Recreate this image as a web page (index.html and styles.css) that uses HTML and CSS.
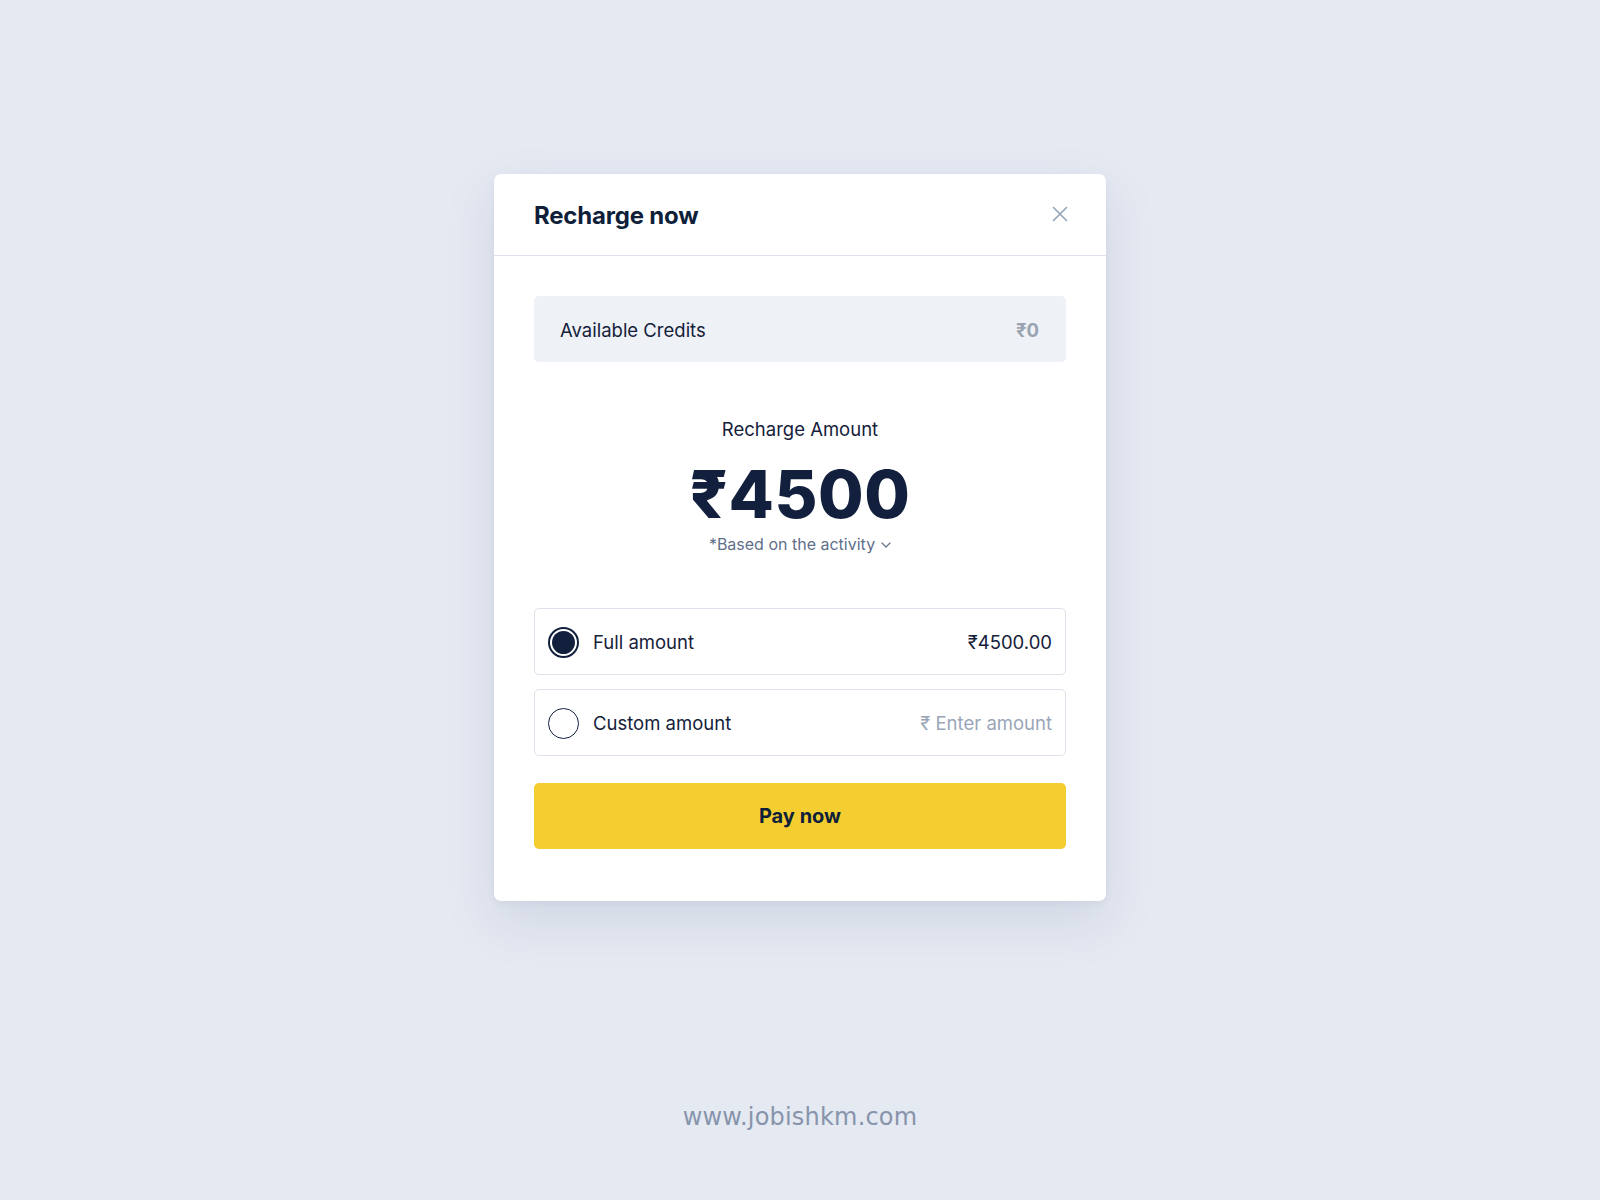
FILE: index.html
```html
<!DOCTYPE html>
<html>
<head>
<meta charset="utf-8">
<link rel="stylesheet" href="styles.css">
</head>
<body>
<main class="page">
  <section class="modal">
    <header class="modal-head">
      <h1 class="title">Recharge now</h1>
      <svg class="close" width="16" height="16" viewBox="0 0 16 16"><path d="M1.5 1.5 L14.5 14.5 M14.5 1.5 L1.5 14.5" stroke="#94a3b8" stroke-width="1.6" stroke-linecap="round" fill="none"/></svg>
    </header>
    <div class="modal-body">
      <div class="credits">
        <span class="credits-label">Available Credits</span>
        <span class="credits-value">₹0</span>
      </div>
      <div class="amount">
        <div class="amount-label">Recharge Amount</div>
        <div class="amount-value">₹4500</div>
        <div class="amount-note">*Based on the activity <svg class="chev" width="10" height="6" viewBox="0 0 10 6"><path d="M1 1 L5 5 L9 1" stroke="#64748b" stroke-width="1.2" fill="none" stroke-linecap="round" stroke-linejoin="round"/></svg></div>
      </div>
      <div class="options">
        <div class="option">
          <span class="radio radio-on"><span class="dot"></span></span>
          <span class="opt-label">Full amount</span>
          <span class="opt-value">₹4500.00</span>
        </div>
        <div class="option">
          <span class="radio"></span>
          <span class="opt-label">Custom amount</span>
          <span class="opt-placeholder">₹ Enter amount</span>
        </div>
      </div>
      <button class="pay">Pay now</button>
    </div>
  </section>
  <footer class="site">www.jobishkm.com</footer>
</main>
</body>
</html>
```

FILE: styles.css
```css
* { box-sizing: border-box; }
html, body { margin: 0; padding: 0; }
body {
  background: #e5e9f2;
  font-family: Inter, "Noto Sans", sans-serif;
  color: #0f1f3a;
  width: 1600px;
  height: 1200px;
  overflow: hidden;
}
.page {
  display: flex;
  flex-direction: column;
  align-items: center;
  padding-top: 174px;
}
.modal {
  width: 612px;
  height: 727px;
  background: #fff;
  border-radius: 7px;
  box-shadow: 0 20px 50px rgba(100, 116, 150, 0.16), 0 2px 6px rgba(100, 116, 150, 0.08);
  display: flex;
  flex-direction: column;
}
.modal-head {
  height: 82px;
  border-bottom: 1px solid #dde2ea;
  display: flex;
  align-items: center;
  justify-content: space-between;
  padding: 2px 38px 0 40px;
}
.title {
  margin: 0;
  font-size: 24px;
  font-weight: 700;
  color: #0f1f3a;
  letter-spacing: -0.2px;
}
.close { display: block; margin-top: -4px; }
.modal-body {
  padding: 40px 40px 0 40px;
  display: flex;
  flex-direction: column;
}
.credits {
  height: 66px;
  background: #eef1f5;
  border-radius: 5px;
  display: flex;
  align-items: center;
  justify-content: space-between;
  padding: 2px 27px 0 26px;
  font-size: 18.5px;
}
.credits-label { color: #15213a; }
.credits-value { color: #9aa3b1; font-weight: 700; }
.amount {
  display: flex;
  flex-direction: column;
  align-items: center;
  padding-top: 56px;
}
.amount-label {
  font-size: 18.5px;
  color: #15213a;
  line-height: 22px;
}
.amount-value {
  font-size: 66px;
  font-weight: 800;
  color: #12203d;
  line-height: 80px;
  margin-top: 14px;
  letter-spacing: 0.5px;
}
.amount-note {
  font-size: 16px;
  color: #5f6f8a;
  line-height: 20px;
  margin-top: 0;
  display: flex;
  align-items: center;
  gap: 6px;
}
.chev { display: block; margin-top: 2px; }
.options {
  display: flex;
  flex-direction: column;
  gap: 14px;
  margin-top: 54px;
}
.option {
  height: 67px;
  border: 1.5px solid #dde2ea;
  border-radius: 5px;
  display: flex;
  align-items: center;
  padding: 1px 13px 0 13px;
  font-size: 18.5px;
}
.radio {
  width: 31px;
  height: 31px;
  border-radius: 50%;
  border: 1.6px solid #12203d;
  display: flex;
  align-items: center;
  justify-content: center;
  flex: none;
}
.radio-on { border-width: 2px; }
.dot {
  width: 23px;
  height: 23px;
  border-radius: 50%;
  background: #12203d;
}
.opt-label {
  margin-left: 14px;
  color: #15213a;
  flex: 1;
}
.opt-value { color: #15213a; }
.opt-placeholder { color: #9aa6b8; }
.pay {
  margin-top: 27px;
  height: 66px;
  border: none;
  border-radius: 5px;
  background: #f4cd30;
  font-family: Inter, "Noto Sans", sans-serif;
  font-size: 20px;
  font-weight: 700;
  color: #0f1f3a;
  cursor: pointer;
}
.site {
  margin-top: 202px;
  font-family: "DejaVu Sans", "Noto Sans", sans-serif;
  font-size: 24px;
  color: #8794ab;
  letter-spacing: 0.2px;
}
```
